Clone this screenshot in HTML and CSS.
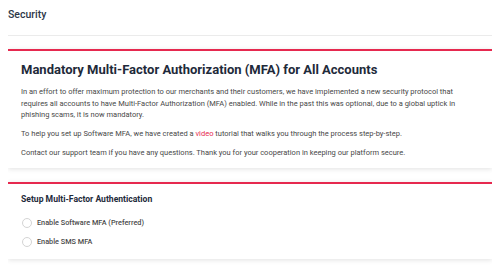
FILE: index.html
```html
<!DOCTYPE html>
<html lang="en">
<head>
    <meta charset="UTF-8">
    <meta name="viewport" content="width=device-width, initial-scale=1.0">
    <title>Security</title>
    <link rel="stylesheet" href="styles.css">
</head>
<body>
    <h1 class="page-title">Security</h1>

    <div class="card">
        <h2 class="card-title">Mandatory Multi-Factor Authorization (MFA) for All Accounts</h2>
        <p>In an effort to offer maximum protection to our merchants and their customers, we have implemented a new security protocol that requires all accounts to have Multi-Factor Authorization (MFA) enabled. While in the past this was optional, due to a global uptick in phishing scams, it is now mandatory.</p>
        <p>To help you set up Software MFA, we have created a <a href="#">video</a> tutorial that walks you through the process step-by-step.</p>
        <p>Contact our support team if you have any questions. Thank you for your cooperation in keeping our platform secure.</p>
    </div>

    <div class="card">
        <h3 class="card-subtitle">Setup Multi-Factor Authentication</h3>
        <label class="option">
            <input type="radio" name="mfa">
            <span>Enable Software MFA (Preferred)</span>
        </label>
        <label class="option">
            <input type="radio" name="mfa">
            <span>Enable SMS MFA</span>
        </label>
    </div>
</body>
</html>
```

FILE: styles.css
```css
* {
    box-sizing: border-box;
    margin: 0;
    padding: 0;
}

body {
    margin: 8px;
    background-color: #fff;
    font-family: Roboto, "Noto Sans", sans-serif;
    color: #484848;
}

.page-title {
    font-size: 10.5px;
    font-weight: 500;
    line-height: 14px;
    color: #2d3748;
    padding-bottom: 13px;
    border-bottom: 1px solid #ebebeb;
    margin-bottom: 13px;
}

.card {
    background-color: #fff;
    border-top: 2px solid #e6294f;
    box-shadow: 0 1px 5px rgba(0, 0, 0, 0.12);
    padding: 9px 13px 9px;
    margin-bottom: 14px;
}

.card-title {
    font-size: 13px;
    font-weight: 700;
    line-height: 20px;
    color: #1e2a3a;
    margin-bottom: 6px;
}

.card p {
    font-size: 7.5px;
    line-height: 11.5px;
    margin-bottom: 7.5px;
}

.card p:last-child {
    margin-bottom: 0;
}

.card a {
    color: #e6294f;
    text-decoration: none;
}

.card-subtitle {
    font-size: 8.6px;
    font-weight: 700;
    line-height: 12px;
    color: #1e2a3a;
    margin-bottom: 11px;
}

.option {
    display: flex;
    align-items: center;
    gap: 5px;
    height: 14px;
    margin-bottom: 5px;
    font-size: 7.3px;
    font-weight: 500;
    color: #4a4a4a;
}

.option:last-child {
    margin-bottom: 1px;
}

.option input {
    appearance: none;
    width: 10px;
    height: 10px;
    margin-left: 1px;
    border: 1px solid #d4d4d4;
    border-radius: 50%;
    background-color: #fff;
}
```
